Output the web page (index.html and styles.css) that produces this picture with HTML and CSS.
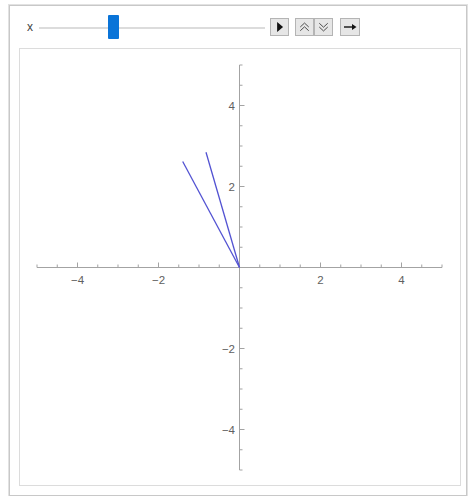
FILE: index.html
```html
<!DOCTYPE html>
<html>
<head>
<meta charset="utf-8">
<link rel="stylesheet" href="styles.css">
</head>
<body>
<div class="panel">
  <div class="controls">
    <span class="var">x</span>
    <div class="slider">
      <div class="track"></div>
      <div class="thumb" style="left:69px"></div>
    </div>
    <button class="btn play" aria-label="play">
      <svg width="18" height="18" viewBox="0 0 18 18"><path d="M6.5 3.8 L12.8 9 L6.5 14.2 Z" fill="#111"/></svg>
    </button>
    <button class="btn up" aria-label="faster">
      <svg width="18" height="18" viewBox="0 0 18 18"><path d="M4.5 9 L9 4.8 L13.5 9 M4.5 13 L9 8.8 L13.5 13" fill="none" stroke="#444" stroke-width="1"/></svg>
    </button>
    <button class="btn down" aria-label="slower">
      <svg width="18" height="18" viewBox="0 0 18 18"><path d="M4.5 5 L9 9.2 L13.5 5 M4.5 9 L9 13.2 L13.5 9" fill="none" stroke="#444" stroke-width="1"/></svg>
    </button>
    <button class="btn dir" aria-label="direction">
      <svg width="18" height="18" viewBox="0 0 18 18"><path d="M3 9 L12 9" stroke="#111" stroke-width="1.4"/><path d="M11 6 L15.5 9 L11 12 Z" fill="#111"/></svg>
    </button>
  </div>
  <div class="frame">
    <svg class="plot" width="440" height="436" viewBox="20 49 440 436">
      <g stroke="#a3a3a3" stroke-width="1" fill="none">
        <path d="M37 267.5 H442 M239.5 65 V470"/>
        <path d="M37 267.5 v-3 M57.25 267.5 v-3 M77.5 267.5 v-5 M97.75 267.5 v-3 M118 267.5 v-3 M138.25 267.5 v-3 M158.5 267.5 v-5 M178.75 267.5 v-3 M199 267.5 v-3 M219.25 267.5 v-3 M259.75 267.5 v-3 M280 267.5 v-3 M300.25 267.5 v-3 M320.5 267.5 v-5 M340.75 267.5 v-3 M361 267.5 v-3 M381.25 267.5 v-3 M401.5 267.5 v-5 M421.75 267.5 v-3 M442 267.5 v-3"/>
        <path d="M239.5 65 h3 M239.5 85.25 h3 M239.5 105.5 h5 M239.5 125.75 h3 M239.5 146 h3 M239.5 166.25 h3 M239.5 186.5 h5 M239.5 206.75 h3 M239.5 227 h3 M239.5 247.25 h3 M239.5 287.75 h3 M239.5 308 h3 M239.5 328.25 h3 M239.5 348.5 h5 M239.5 368.75 h3 M239.5 389 h3 M239.5 409.25 h3 M239.5 429.5 h5 M239.5 449.75 h3 M239.5 470 h3"/>
      </g>
      <g class="lbl" text-anchor="middle">
        <text x="77.5" y="284">−4</text>
        <text x="158.5" y="284">−2</text>
        <text x="320.5" y="284">2</text>
        <text x="401.5" y="284">4</text>
      </g>
      <g class="lbl" text-anchor="end">
        <text x="235" y="110">4</text>
        <text x="235" y="191">2</text>
        <text x="235" y="352.5">−2</text>
        <text x="235" y="433.5">−4</text>
      </g>
      <g stroke="#5252d2" stroke-width="1.3" fill="none">
        <path d="M239.5 267.5 L182.7 161.5"/>
        <path d="M239.5 267.5 L206 152.3"/>
      </g>
    </svg>
  </div>
</div>
</body>
</html>
```
FILE: styles.css
```css
html, body {
  margin: 0;
  padding: 0;
  background: #ffffff;
}
body {
  font-family: "Liberation Sans", Arial, sans-serif;
}
.panel {
  box-sizing: border-box;
  margin: 5px 0 0 9px;
  width: 458px;
  height: 491px;
  border: 1px solid #c8c8c8;
  box-shadow: 0 0 0 1px #e2e2e2;
  padding: 9px 5px 9px 9px;
  display: flex;
  flex-direction: column;
  gap: 9px;
}
.controls {
  height: 24px;
  display: flex;
  align-items: center;
  padding-left: 8px;
}
.var {
  font-size: 12px;
  color: #444;
  width: 6px;
  margin-right: 6px;
  line-height: 12px;
}
.slider {
  position: relative;
  width: 226px;
  height: 24px;
  margin-right: 5px;
}
.track {
  position: absolute;
  left: 0;
  right: 0;
  top: 12px;
  height: 2px;
  background: #dcdcdc;
}
.thumb {
  position: absolute;
  top: 0;
  width: 11px;
  height: 24px;
  background: #0a74d8;
  border-radius: 1px;
}
.btn {
  box-sizing: border-box;
  width: 19px;
  height: 18px;
  padding: 0;
  margin: 0;
  border: 1px solid #b4b4b4;
  background: #e6e6e6;
  display: flex;
  align-items: center;
  justify-content: center;
}
.btn svg {
  display: block;
}
.up {
  margin-left: 6px;
}
.down {
  margin-left: 0;
}
.dir {
  margin-left: 7px;
  width: 20px;
}
.frame {
  box-sizing: border-box;
  width: 442px;
  height: 438px;
  border: 1px solid #dcdcdc;
}
.plot {
  display: block;
}
.lbl text {
  font-family: "Liberation Sans", Arial, sans-serif;
  font-size: 11.5px;
  fill: #606060;
}
```
